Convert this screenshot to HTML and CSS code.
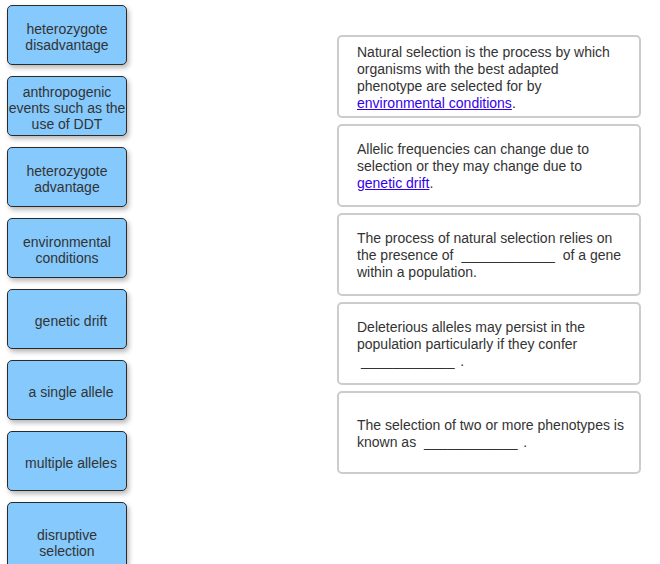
FILE: index.html
```html
<!DOCTYPE html>
<html>
<head>
<meta charset="utf-8">
<link rel="stylesheet" href="styles.css">
</head>
<body>
<div class="page">
  <div class="tiles">
    <div class="tile">heterozygote disadvantage</div>
    <div class="tile">anthropogenic events such as the use of DDT</div>
    <div class="tile">heterozygote advantage</div>
    <div class="tile">environmental conditions</div>
    <div class="tile tile-shift">genetic drift</div>
    <div class="tile tile-shift">a single allele</div>
    <div class="tile tile-shift">multiple alleles</div>
    <div class="tile tile-tall">disruptive selection</div>
  </div>
  <div class="targets">
    <div class="target"><p>Natural selection is the process by which organisms with the best adapted phenotype are selected for by <a class="answer" href="#">environmental conditions</a>.</p></div>
    <div class="target"><p>Allelic frequencies can change due to selection or they may change due to <a class="answer" href="#">genetic drift</a>.</p></div>
    <div class="target"><p>The process of natural selection relies on the presence of <span class="blank">____________</span> of a gene within a population.</p></div>
    <div class="target"><p>Deleterious alleles may persist in the population particularly if they confer <span class="blank blank-end">____________</span> .</p></div>
    <div class="target"><p>The selection of two or more phenotypes is known as <span class="blank blank-end">____________</span> .</p></div>
  </div>
</div>
</body>
</html>
```
FILE: styles.css
```css
html, body {
  margin: 0;
  padding: 0;
  background: #ffffff;
}

body {
  font-family: "Liberation Sans", Arial, Helvetica, sans-serif;
  font-size: 14px;
  color: #333333;
}

.page {
  display: flex;
  align-items: flex-start;
  padding: 5px 0 0 7px;
}

.tiles {
  display: flex;
  flex-direction: column;
  gap: 11px;
  width: 120px;
  flex: none;
}

.tile {
  box-sizing: border-box;
  width: 120px;
  height: 60px;
  display: flex;
  align-items: center;
  justify-content: center;
  text-align: center;
  line-height: 16px;
  padding-top: 4px;
  background: #85c9fd;
  border: 1px solid #2a2a2a;
  border-radius: 5px;
  box-shadow: 2px 3px 5px rgba(0, 0, 0, 0.28);
  color: #333333;
}

.tile-shift {
  padding-left: 8px;
}

.tile-tall {
  height: 78px;
}

.targets {
  display: flex;
  flex-direction: column;
  gap: 6px;
  margin-left: 210px;
  margin-top: 30px;
  flex: none;
}

.target {
  box-sizing: border-box;
  width: 304px;
  height: 83px;
  display: flex;
  align-items: center;
  padding: 2px 14px 0 18px;
  border: 2px solid #cccccc;
  border-radius: 5px;
  background: #ffffff;
}

.target p {
  margin: 0;
  line-height: 17px;
  width: 268px;
}

.answer {
  color: #3300ee;
  text-decoration: underline;
}

.blank {
  padding: 0 4px;
}

.blank-end {
  padding-right: 2px;
}
```
